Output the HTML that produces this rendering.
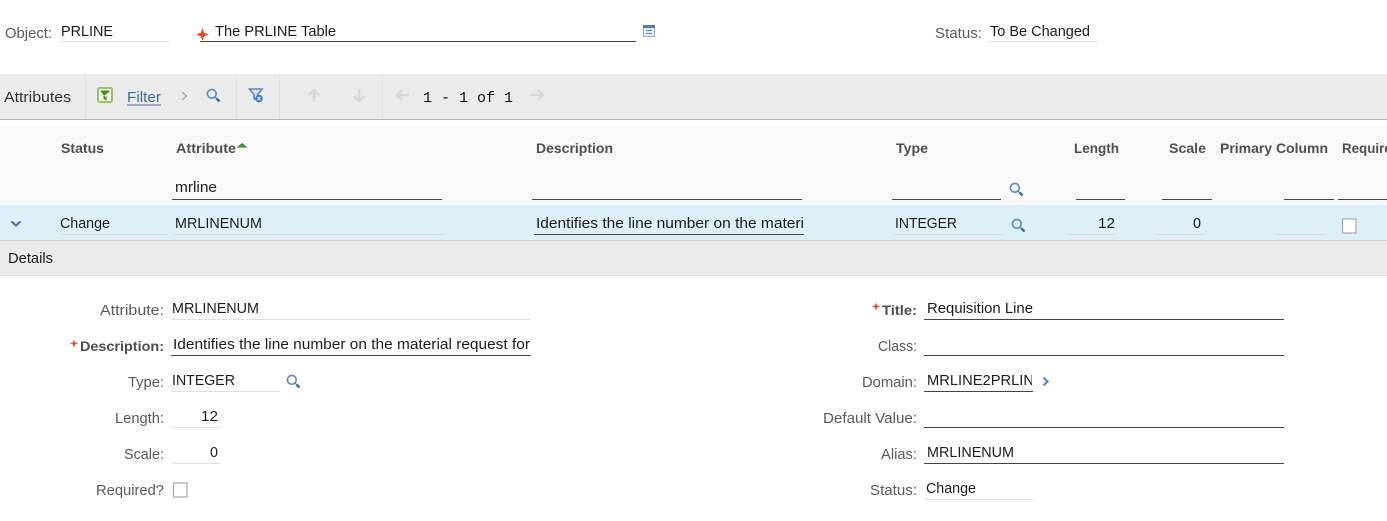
<!DOCTYPE html>
<html lang="en"><head><meta charset="utf-8"><title>Attributes</title>
<style>
html,body{margin:0;padding:0;background:#fff;width:1387px;height:521px;overflow:hidden}
svg{display:block}
text{font-family:"Liberation Sans",sans-serif;font-size:14.5px;fill:#1c1c1c;white-space:pre}
.l{fill:#5a5a5a}
.h{fill:#4f4f4f;font-weight:bold;font-size:14px}
.d{stroke:#444;stroke-width:1.2;shape-rendering:crispEdges}
.g{stroke:#e0e0e0;stroke-width:1;shape-rendering:crispEdges}
.s{stroke:#dcdcdc;stroke-width:1;shape-rendering:crispEdges}
.ar{fill:none;stroke:#d8d8d8;stroke-width:2.6}
</style></head><body>
<svg width="1387" height="521" viewBox="0 0 1387 521" xmlns="http://www.w3.org/2000/svg">
<defs>
<symbol id="mag" viewBox="0 0 15 15" overflow="visible"><circle cx="5.8" cy="5.8" r="4.4" fill="none" stroke="#5a88c6" stroke-width="1.6"/><path d="M9.200 9.200l1.300 1.300" stroke="#5a88c6" stroke-width="1.400" fill="none"/><path d="M10.500 10.500l3 3" stroke="#3a6aa8" stroke-width="2.400" fill="none"/></symbol>
<symbol id="star" viewBox="0 0 12 12" overflow="visible"><path d="M6 0L7.600 4.400 12 6 7.600 7.600 6 12 4.400 7.600 0 6 4.400 4.400Z" fill="#e8501e"/></symbol>
<clipPath id="c1"><rect x="534" y="210" width="269" height="24"/></clipPath>
<clipPath id="c2"><rect x="172" y="335" width="358" height="20"/></clipPath>
<clipPath id="c3"><rect x="925" y="370" width="107" height="20"/></clipPath>
</defs>

<!-- top form -->
<text class="l" x="5" y="38" textLength="47" lengthAdjust="spacingAndGlyphs">Object:</text>
<text x="61" y="36" textLength="52" lengthAdjust="spacingAndGlyphs">PRLINE</text>
<line class="g" x1="60" x2="169" y1="41.5" y2="41.5"/>
<use href="#star" x="196" y="28" width="13" height="13"/>
<text x="215" y="36" textLength="121" lengthAdjust="spacingAndGlyphs">The PRLINE Table</text>
<line class="d" x1="200" x2="636" y1="41.5" y2="41.5"/>
<rect x="643.500" y="25.500" width="11" height="11" fill="#e4edf8" stroke="#8aabdb"/>
<rect x="643" y="25" width="12" height="3" fill="#4a7cc0"/>
<rect x="646" y="30" width="6" height="1" fill="#5a88c6"/><rect x="646" y="33" width="6" height="1" fill="#5a88c6"/>
<text class="l" x="935" y="38" textLength="47" lengthAdjust="spacingAndGlyphs">Status:</text>
<text x="990" y="36" textLength="100" lengthAdjust="spacingAndGlyphs">To Be Changed</text>
<line class="g" x1="988" x2="1098" y1="41.5" y2="41.5"/>

<!-- toolbar -->
<rect x="0" y="74" width="1387" height="45" fill="#ebebeb"/>
<rect x="0" y="119" width="1387" height="1" fill="#b4b4b4"/>
<rect x="85" y="74" width="1" height="45" fill="#e0e0e0"/>
<rect x="236" y="74" width="1" height="45" fill="#e0e0e0"/>
<rect x="279" y="74" width="1" height="45" fill="#e0e0e0"/>
<rect x="382" y="74" width="1" height="45" fill="#e0e0e0"/>
<text x="4" y="102" style="fill:#333" textLength="67" lengthAdjust="spacingAndGlyphs">Attributes</text>
<rect x="98" y="88" width="14" height="14" rx="1.500" fill="#f4f8ea" stroke="#93b85c" stroke-width="1.800"/>
<path d="M100 90.500h10l-3.500 4.500v5.500l-3-1.500v-4z" fill="#4f8a1e"/><path d="M104.500 95l3-2.200-2.200 5z" fill="#e2eeca"/>
<text x="127" y="102" style="fill:#3b6c9f" textLength="34" lengthAdjust="spacingAndGlyphs">Filter</text>
<rect x="127" y="104.500" width="34" height="1" fill="#3b6c9f"/>
<path d="M182 92l4.500 4-4.500 4" fill="none" stroke="#a8a8a8" stroke-width="1.500"/>
<use href="#mag" x="206" y="88" width="15" height="15"/>
<path d="M249.500 89h12.500l-4.500 5.500v6l-3.500-2v-4z" fill="#d7e3f3" stroke="#5a88c6" stroke-width="1.600"/>
<circle cx="259" cy="98.500" r="3.800" fill="#4a7cc0"/><path d="M257.500 97l3 3m0-3l-3 3" stroke="#ebebeb" stroke-width="1"/>
<path class="ar" d="M314 102V90m-5 5l5-5 5 5"/>
<path class="ar" d="M359 89v12m-5-5l5 5 5-5"/>
<path class="ar" d="M409 95h-12m5-5l-5 5 5 5"/>
<path class="ar" d="M531 95h12m-5-5l5 5-5 5"/>
<text x="423" y="102" style="font-family:'Liberation Mono',monospace;font-size:15px;fill:#111" textLength="90">1 - 1 of 1</text>

<!-- table header -->
<rect x="0" y="125" width="1387" height="80" fill="#f9f9f9"/>
<text class="h" x="61" y="153" textLength="43" lengthAdjust="spacingAndGlyphs">Status</text>
<text class="h" x="176" y="153" textLength="60" lengthAdjust="spacingAndGlyphs">Attribute</text>
<path d="M236.500 147.500l5.500-4.500 5.500 4.500z" fill="#3f8a2e"/>
<text class="h" x="536" y="153" textLength="77" lengthAdjust="spacingAndGlyphs">Description</text>
<text class="h" x="896" y="153" textLength="32" lengthAdjust="spacingAndGlyphs">Type</text>
<text class="h" x="1074" y="153" textLength="45" lengthAdjust="spacingAndGlyphs">Length</text>
<text class="h" x="1169" y="153" textLength="37" lengthAdjust="spacingAndGlyphs">Scale</text>
<text class="h" x="1220" y="153" textLength="108" lengthAdjust="spacingAndGlyphs">Primary Column</text>
<text class="h" x="1342" y="153" textLength="66" lengthAdjust="spacingAndGlyphs">Required?</text>

<!-- filter row -->
<text x="175" y="192" textLength="42" lengthAdjust="spacingAndGlyphs">mrline</text>
<line class="d" x1="172" x2="442" y1="199.500" y2="199.500"/>
<line class="d" x1="532" x2="802" y1="199.500" y2="199.500"/>
<line class="d" x1="892" x2="1001" y1="199.500" y2="199.500"/>
<use href="#mag" x="1009" y="182" width="15" height="15"/>
<line class="d" x1="1076" x2="1125" y1="199.500" y2="199.500"/>
<line class="d" x1="1162" x2="1212" y1="199.500" y2="199.500"/>
<line class="d" x1="1284" x2="1334" y1="199.500" y2="199.500"/>
<line class="d" x1="1338" x2="1387" y1="199.500" y2="199.500"/>

<!-- data row -->
<rect x="0" y="205" width="1387" height="35" fill="#ddf0f8"/>
<path d="M11.500 221.500l4.500 4 4.500-4" fill="none" stroke="#4a72ad" stroke-width="2"/>
<text x="60" y="228" textLength="50" lengthAdjust="spacingAndGlyphs">Change</text>
<line class="s" x1="59" x2="168" y1="234.500" y2="234.500"/>
<text x="175" y="228" textLength="87" lengthAdjust="spacingAndGlyphs">MRLINENUM</text>
<line class="s" x1="174" x2="444" y1="234.500" y2="234.500"/>
<text x="536" y="228" clip-path="url(#c1)" textLength="268" lengthAdjust="spacingAndGlyphs">Identifies the line number on the materi</text>
<line class="d" x1="534" x2="804" y1="234.500" y2="234.500"/>
<text x="895" y="228" textLength="62" lengthAdjust="spacingAndGlyphs">INTEGER</text>
<line class="s" x1="894" x2="1003" y1="234.500" y2="234.500"/>
<use href="#mag" x="1011" y="218" width="15" height="15"/>
<text x="1098" y="228" textLength="17" lengthAdjust="spacingAndGlyphs">12</text>
<line class="s" x1="1068" x2="1117" y1="234.500" y2="234.500"/>
<text x="1193" y="228" textLength="8" lengthAdjust="spacingAndGlyphs">0</text>
<line class="s" x1="1154" x2="1204" y1="234.500" y2="234.500"/>
<line class="s" x1="1276" x2="1326" y1="234.500" y2="234.500"/>
<rect x="1342.500" y="219" width="13.500" height="14" fill="#fff" stroke="#a8a8a8" stroke-width="1.200"/>
<rect x="0" y="240" width="1387" height="1" fill="#cfcfcf"/>

<!-- details bar -->
<rect x="0" y="241" width="1387" height="34" fill="#ebebeb"/>
<rect x="0" y="275" width="1387" height="1" fill="#e0e0e0"/>
<text x="8" y="263" textLength="45" lengthAdjust="spacingAndGlyphs">Details</text>

<!-- left details -->
<text class="l" x="100" y="315" textLength="64" lengthAdjust="spacingAndGlyphs">Attribute:</text>
<text x="172" y="313" textLength="87" lengthAdjust="spacingAndGlyphs">MRLINENUM</text>
<line class="g" x1="171" x2="531" y1="319.500" y2="319.500"/>
<use href="#star" x="70" y="339" width="8" height="9"/>
<text class="h" x="80" y="351" textLength="84" lengthAdjust="spacingAndGlyphs">Description:</text>
<text x="173" y="349" clip-path="url(#c2)" textLength="357" lengthAdjust="spacingAndGlyphs">Identifies the line number on the material request for</text>
<line class="d" x1="171" x2="531" y1="355.500" y2="355.500"/>
<text class="l" x="128" y="387" textLength="36" lengthAdjust="spacingAndGlyphs">Type:</text>
<text x="172" y="385" textLength="63" lengthAdjust="spacingAndGlyphs">INTEGER</text>
<line class="g" x1="171" x2="280" y1="391.500" y2="391.500"/>
<use href="#mag" x="286" y="374" width="15" height="15"/>
<text class="l" x="115" y="423" textLength="49" lengthAdjust="spacingAndGlyphs">Length:</text>
<text x="201" y="421" textLength="17" lengthAdjust="spacingAndGlyphs">12</text>
<line class="g" x1="171" x2="221" y1="427.500" y2="427.500"/>
<text class="l" x="124" y="459" textLength="40" lengthAdjust="spacingAndGlyphs">Scale:</text>
<text x="210" y="457" textLength="8" lengthAdjust="spacingAndGlyphs">0</text>
<line class="g" x1="171" x2="221" y1="463.500" y2="463.500"/>
<text class="l" x="96" y="495" textLength="68" lengthAdjust="spacingAndGlyphs">Required?</text>
<rect x="173.500" y="483" width="13.500" height="14" fill="#fff" stroke="#a8a8a8" stroke-width="1.200"/>

<!-- right details -->
<use href="#star" x="872" y="302" width="8" height="9"/>
<text class="h" x="882" y="315" textLength="35" lengthAdjust="spacingAndGlyphs">Title:</text>
<text x="927" y="313" textLength="106" lengthAdjust="spacingAndGlyphs">Requisition Line</text>
<line class="d" x1="924" x2="1284" y1="319.500" y2="319.500"/>
<text class="l" x="878" y="351" textLength="39" lengthAdjust="spacingAndGlyphs">Class:</text>
<line class="d" x1="924" x2="1284" y1="355.500" y2="355.500"/>
<text class="l" x="862" y="387" textLength="55" lengthAdjust="spacingAndGlyphs">Domain:</text>
<text x="927" y="385" clip-path="url(#c3)" textLength="107" lengthAdjust="spacingAndGlyphs">MRLINE2PRLIN</text>
<line class="d" x1="924" x2="1033" y1="391.500" y2="391.500"/>
<path d="M1043.500 377.500l4 4-4 4" fill="none" stroke="#5a88c6" stroke-width="2.200"/>
<text class="l" x="823" y="423" textLength="94" lengthAdjust="spacingAndGlyphs">Default Value:</text>
<line class="d" x1="924" x2="1284" y1="427.500" y2="427.500"/>
<text class="l" x="881" y="459" textLength="36" lengthAdjust="spacingAndGlyphs">Alias:</text>
<text x="927" y="457" textLength="87" lengthAdjust="spacingAndGlyphs">MRLINENUM</text>
<line class="d" x1="924" x2="1284" y1="463.500" y2="463.500"/>
<text class="l" x="870" y="495" textLength="47" lengthAdjust="spacingAndGlyphs">Status:</text>
<text x="926" y="493" textLength="50" lengthAdjust="spacingAndGlyphs">Change</text>
<line class="g" x1="924" x2="1033" y1="499.500" y2="499.500"/>
</svg>
</body></html>
